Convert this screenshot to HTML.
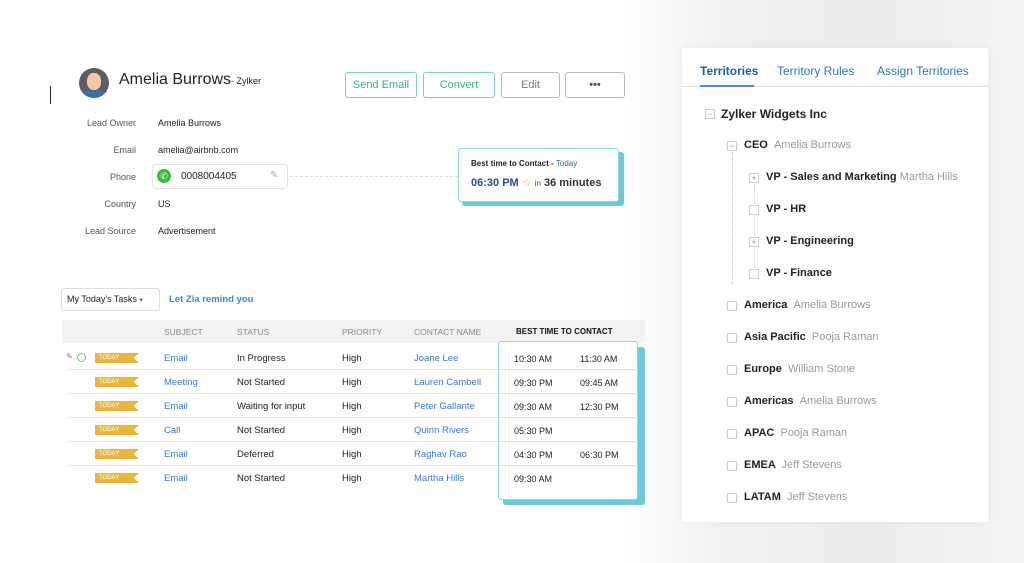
<!DOCTYPE html>
<html><head><style>
*{margin:0;padding:0;box-sizing:border-box}
body{width:1024px;height:563px;position:relative;overflow:hidden;background:#fff;font-family:"Liberation Sans",sans-serif;color:#222}
.a{position:absolute;white-space:nowrap}
.bg{position:absolute;left:620px;top:0;width:404px;height:563px;background:linear-gradient(90deg,#fff 0%,#f1f1f1 25%,#ececec 60%,#f3f3f3 100%)}
.btn{position:absolute;top:72px;height:26px;border:1px solid #7fd3ad;border-radius:3px;color:#2fb57a;font-size:11px;text-align:center;line-height:24px}
.lab{position:absolute;font-size:9px;color:#555;text-align:right;width:75px;left:61px}
.val{position:absolute;font-size:9px;color:#222;left:158px}
.th{position:absolute;top:327px;font-size:8.5px;color:#888}
.td{position:absolute;font-size:9.5px}
.bl{color:#3a78d8}
.tag{position:absolute;left:95px;width:44px;height:10px;background:#e8b63f;color:#fff;font-size:6px;line-height:10px;padding-left:4px;padding-top:0;clip-path:polygon(0 0,100% 0,88% 50%,100% 100%,0 100%)}
.tag span{display:block;line-height:10px}
.line{position:absolute;left:66px;width:572px;height:1px;background:#e6e6e6}
.tm{position:absolute;font-size:9px}
.tab{position:absolute;top:64px;font-size:12px;color:#2a76c6}
.nd{position:absolute;font-size:11px;font-weight:bold;color:#222}
.nd span{font-weight:normal;color:#999}
.cb{position:absolute;width:10px;height:10px;border:1px solid #ccc;background:#fff;font-size:9px;line-height:8px;text-align:center;color:#999}
</style></head><body>
<div class="bg"></div>
<div class="a" style="left:50px;top:86px;width:1px;height:18px;background:#222"></div>
<div class="a" style="left:79px;top:68px;width:30px;height:30px;border-radius:50%;background:#5d5d5d;overflow:hidden"><div style="position:absolute;left:8px;top:5px;width:14px;height:17px;border-radius:45%;background:#f2c9a6"></div><div style="position:absolute;left:4px;top:22px;width:22px;height:10px;background:#3b6fa8;border-radius:5px 5px 0 0"></div></div>
<div class="a" style="left:119px;top:71px;font-size:16px">Amelia Burrows<span style="font-size:9px">- Zylker</span></div>
<div class="btn" style="left:345px;width:72px">Send Email</div>
<div class="btn" style="left:423px;width:72px">Convert</div>
<div class="btn" style="left:501px;width:59px;border-color:#bbb;color:#777">Edit</div>
<div class="btn" style="left:565px;width:60px;border-color:#bbb;color:#555;font-weight:bold">•••</div>
<div class="lab" style="top:118px">Lead Owner</div><div class="val" style="top:118px">Amelia Burrows</div>
<div class="lab" style="top:145px">Email</div><div class="val" style="top:145px">amelia@airbnb.com</div>
<div class="lab" style="top:172px">Phone</div>
<div class="a" style="left:152px;top:164px;width:136px;height:25px;border:1px solid #e3e3e3;border-radius:3px"></div>
<div class="a" style="left:157px;top:169px;width:14px;height:14px;border-radius:50%;background:#3cba3c;color:#fff;font-size:9px;text-align:center;line-height:14px">✆</div>
<div class="val" style="top:171px;left:181px;font-size:10px">0008004405</div>
<div class="a" style="left:270px;top:170px;font-size:10px;color:#aaa">✎</div>
<div class="a" style="left:290px;top:176px;width:168px;border-top:1px dashed #ddd"></div>
<div class="lab" style="top:199px">Country</div><div class="val" style="top:199px">US</div>
<div class="lab" style="top:226px">Lead Source</div><div class="val" style="top:226px">Advertisement</div>
<div class="a" style="left:462px;top:152px;width:162px;height:54px;background:#6ccad6;border-radius:3px"></div>
<div class="a" style="left:458px;top:148px;width:161px;height:54px;background:#fff;border:1px solid #8ad6df;border-radius:3px"></div>
<div class="a" style="left:471px;top:159px;font-size:8px;font-weight:bold">Best time to Contact - <span style="color:#2a62c0;font-weight:normal">Today</span></div>
<div class="a" style="left:471px;top:176px;font-size:11px;font-weight:bold;color:#234c9a">06:30 PM <span style="color:#f0b030;font-weight:normal">☆</span> <span style="font-size:8px;color:#444;font-weight:normal">in</span> <span style="color:#333">36 minutes</span></div>
<div class="a" style="left:61px;top:288px;width:99px;height:23px;border:1px solid #ddd;border-radius:3px;font-size:9px;line-height:21px;padding-left:5px">My Today's Tasks <span style="font-size:7px;color:#666">▾</span></div>
<div class="a" style="left:169px;top:294px;font-size:9.5px;font-weight:bold;color:#3a84e0">Let Zia remind you</div>
<div class="a" style="left:62px;top:320px;width:583px;height:23px;background:#f2f2f2"></div>
<div class="th" style="left:164px">SUBJECT</div><div class="th" style="left:237px">STATUS</div><div class="th" style="left:342px">PRIORITY</div><div class="th" style="left:414px">CONTACT NAME</div>
<div class="th" style="left:516px;color:#111;font-weight:bold;font-size:8px">BEST TIME TO CONTACT</div>
<div class="line" style="top:369px"></div><div class="line" style="top:393px"></div><div class="line" style="top:417px"></div><div class="line" style="top:441px"></div><div class="line" style="top:465px"></div>
<div class="a" style="left:503px;top:347px;width:142px;height:158px;background:#6ccad6;border-radius:3px"></div>
<div class="a" style="left:498px;top:341px;width:140px;height:159px;background:#fff;border:1px solid #8ad6df;border-radius:3px"></div>
<div class="a" style="left:498px;top:369px;width:140px;height:1px;background:#c4ebf0"></div><div class="a" style="left:498px;top:393px;width:140px;height:1px;background:#c4ebf0"></div><div class="a" style="left:498px;top:417px;width:140px;height:1px;background:#c4ebf0"></div><div class="a" style="left:498px;top:441px;width:140px;height:1px;background:#c4ebf0"></div><div class="a" style="left:498px;top:465px;width:140px;height:1px;background:#c4ebf0"></div>
<div class="a" style="left:66px;top:352px;font-size:8px;color:#777">✎</div><div class="a" style="left:77px;top:353px;width:9px;height:9px;border:1px solid #6c6;border-radius:50%"></div>
<div class="tag" style="top:353px"><span>TODAY</span></div><div class="tag" style="top:377px"><span>TODAY</span></div><div class="tag" style="top:401px"><span>TODAY</span></div><div class="tag" style="top:425px"><span>TODAY</span></div><div class="tag" style="top:449px"><span>TODAY</span></div><div class="tag" style="top:473px"><span>TODAY</span></div>
<div class="td bl" style="left:164px;top:353px">Email</div><div class="td" style="left:237px;top:353px">In Progress</div><div class="td" style="left:342px;top:353px">High</div><div class="td bl" style="left:414px;top:353px">Joane Lee</div><div class="tm" style="left:514px;top:354px">10:30 AM</div><div class="tm" style="left:580px;top:354px">11:30 AM</div>
<div class="td bl" style="left:164px;top:377px">Meeting</div><div class="td" style="left:237px;top:377px">Not Started</div><div class="td" style="left:342px;top:377px">High</div><div class="td bl" style="left:414px;top:377px">Lauren Cambell</div><div class="tm" style="left:514px;top:378px">09:30 PM</div><div class="tm" style="left:580px;top:378px">09:45 AM</div>
<div class="td bl" style="left:164px;top:401px">Email</div><div class="td" style="left:237px;top:401px">Waiting for input</div><div class="td" style="left:342px;top:401px">High</div><div class="td bl" style="left:414px;top:401px">Peter Gallante</div><div class="tm" style="left:514px;top:402px">09:30 AM</div><div class="tm" style="left:580px;top:402px">12:30 PM</div>
<div class="td bl" style="left:164px;top:425px">Call</div><div class="td" style="left:237px;top:425px">Not Started</div><div class="td" style="left:342px;top:425px">High</div><div class="td bl" style="left:414px;top:425px">Quinn Rivers</div><div class="tm" style="left:514px;top:426px">05:30 PM</div>
<div class="td bl" style="left:164px;top:449px">Email</div><div class="td" style="left:237px;top:449px">Deferred</div><div class="td" style="left:342px;top:449px">High</div><div class="td bl" style="left:414px;top:449px">Raghav Rao</div><div class="tm" style="left:514px;top:450px">04:30 PM</div><div class="tm" style="left:580px;top:450px">06:30 PM</div>
<div class="td bl" style="left:164px;top:473px">Email</div><div class="td" style="left:237px;top:473px">Not Started</div><div class="td" style="left:342px;top:473px">High</div><div class="td bl" style="left:414px;top:473px">Martha Hills</div><div class="tm" style="left:514px;top:474px">09:30 AM</div>
<div class="a" style="left:682px;top:48px;width:306px;height:474px;background:#fff;box-shadow:0 0 8px rgba(0,0,0,.06)"></div>
<div class="a" style="left:682px;top:86px;width:306px;height:1px;background:#ddd"></div>
<div class="tab" style="left:700px;font-weight:bold;color:#1f5fa8">Territories</div>
<div class="a" style="left:700px;top:85px;width:54px;height:2px;background:#4a90d9"></div>
<div class="tab" style="left:777px">Territory Rules</div><div class="tab" style="left:877px">Assign Territories</div>
<div class="a" style="left:732px;top:152px;height:132px;border-left:1px dotted #bbb"></div>
<div class="a" style="left:754px;top:184px;height:86px;border-left:1px dotted #ccc"></div>
<div class="cb" style="left:705px;top:109px">−</div><div class="nd" style="left:721px;top:107px;font-size:12px">Zylker Widgets Inc</div>
<div class="cb" style="left:727px;top:141px">−</div><div class="nd" style="left:744px;top:139px">CEO <span>&nbsp;Amelia Burrows</span></div>
<div class="cb" style="left:749px;top:173px">+</div><div class="nd" style="left:766px;top:171px">VP - Sales and Marketing <span>Martha Hills</span></div>
<div class="cb" style="left:749px;top:205px"></div><div class="nd" style="left:766px;top:203px">VP - HR</div>
<div class="cb" style="left:749px;top:237px">+</div><div class="nd" style="left:766px;top:235px">VP - Engineering</div>
<div class="cb" style="left:749px;top:269px"></div><div class="nd" style="left:766px;top:267px">VP - Finance</div>
<div class="cb" style="left:727px;top:301px"></div><div class="nd" style="left:744px;top:299px">America <span>&nbsp;Amelia Burrows</span></div>
<div class="cb" style="left:727px;top:333px"></div><div class="nd" style="left:744px;top:331px">Asia Pacific <span>&nbsp;Pooja Raman</span></div>
<div class="cb" style="left:727px;top:365px"></div><div class="nd" style="left:744px;top:363px">Europe <span>&nbsp;William Stone</span></div>
<div class="cb" style="left:727px;top:397px"></div><div class="nd" style="left:744px;top:395px">Americas <span>&nbsp;Amelia Burrows</span></div>
<div class="cb" style="left:727px;top:429px"></div><div class="nd" style="left:744px;top:427px">APAC <span>&nbsp;Pooja Raman</span></div>
<div class="cb" style="left:727px;top:461px"></div><div class="nd" style="left:744px;top:459px">EMEA <span>&nbsp;Jeff Stevens</span></div>
<div class="cb" style="left:727px;top:493px"></div><div class="nd" style="left:744px;top:491px">LATAM <span>&nbsp;Jeff Stevens</span></div>
</body></html>
